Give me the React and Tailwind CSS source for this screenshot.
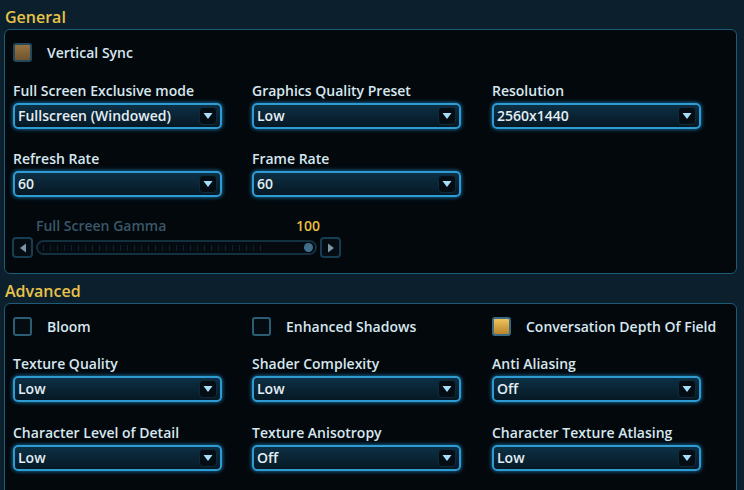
const font = { fontFamily: '"Open Sans", "DejaVu Sans", sans-serif' }

function Arrow() {
  return (
    <span className="absolute right-[3px] top-[2px] bottom-[2px] w-[18px] rounded-[4px] bg-[#050d14] border border-[#0e2a3a] flex items-center justify-center">
      <svg width="10" height="8" viewBox="0 0 10 8">
        <path d="M0.5 1 L9.5 1 L5 7 Z" fill="#a6defa" />
      </svg>
    </span>
  )
}

function Dropdown({ value }) {
  return (
    <div className="relative w-[209px] h-[26px] rounded-[5px] border-2 border-[#2f9bd3] bg-gradient-to-b from-[#0d3045] to-[#061824] shadow-[0_0_4px_#1c86c0] flex items-center pl-[3px]">
      <span className="text-[14px] font-semibold text-[#e3eef4] leading-none whitespace-nowrap">{value}</span>
      <Arrow />
    </div>
  )
}

function Field({ label, value }) {
  return (
    <div className="flex flex-col gap-[4px]">
      <span className="h-[16px] text-[14px] font-semibold text-[#d6e7ef] leading-[16px] whitespace-nowrap">{label}</span>
      <Dropdown value={value} />
    </div>
  )
}

function Check({ state, label }) {
  const box =
    state === 'gold'
      ? 'bg-gradient-to-b from-[#f0c45a] to-[#b8852a] border-[#3c6a82]'
      : state === 'brown'
      ? 'bg-gradient-to-b from-[#97733f] to-[#6e5430] border-[#24485c]'
      : 'bg-[#040c12] border-[#2b5d75]'
  return (
    <div className="flex items-center h-[20px]">
      <span className={`shrink-0 w-[19px] h-[19px] rounded-[3px] border-2 ${box}`} />
      <span className="ml-[15px] text-[14px] font-semibold text-[#d6e7ef] whitespace-nowrap">{label}</span>
    </div>
  )
}

function Slider() {
  return (
    <div className="flex flex-col">
      <div className="flex items-end h-[16px] pl-[23px] pr-[24px] w-[331px]">
        <span className="text-[14px] font-semibold text-[#3b5768] leading-[16px] whitespace-nowrap">Full Screen Gamma</span>
        <span className="ml-auto text-[14px] font-semibold text-[#e7bf3e] leading-[16px]">100</span>
      </div>
      <div className="flex items-center gap-[3px] mt-[3px] -ml-[1px]">
        <span className="w-[21px] h-[21px] rounded-[4px] border-2 border-[#173d52] bg-[#050c12] flex items-center justify-center">
          <svg width="8" height="10" viewBox="0 0 8 10"><path d="M7 0.5 L7 9.5 L1 5 Z" fill="#7d97a6" /></svg>
        </span>
        <span className="relative w-[281px] h-[15px] rounded-full border-2 border-[#12303f] bg-[#040a0f] flex items-center px-[5px] gap-[6px] overflow-hidden">
          {Array.from({ length: 32 }).map((_, i) => (
            <span key={i} className="w-[1px] h-[6px] bg-[#10242f]" />
          ))}
          <span className="absolute right-[2px] top-[1px] w-[9px] h-[9px] rounded-full bg-[#3f6f8c]" />
        </span>
        <span className="w-[21px] h-[21px] rounded-[4px] border-2 border-[#173d52] bg-[#050c12] flex items-center justify-center">
          <svg width="8" height="10" viewBox="0 0 8 10"><path d="M1 0.5 L1 9.5 L7 5 Z" fill="#7d97a6" /></svg>
        </span>
      </div>
    </div>
  )
}

const grid = 'grid grid-cols-[239px_240px_209px]'

export default function App() {
  return (
    <div className="w-[744px] h-[490px] overflow-hidden bg-[#0b202c] pl-[4px] pr-[7px]" style={font}>
      <div className="h-[29px] flex items-center pl-[1px] pt-[4px]">
        <span className="text-[16px] font-semibold text-[#e9c24a] leading-none">General</span>
      </div>
      <div className="rounded-[6px] border border-[#1f5a76] bg-[#03080d] pl-[8px] pt-[12px] pb-[14px] h-[245px]">
        <Check state="brown" label="Vertical Sync" />
        <div className={`${grid} mt-[21px] gap-y-[22px]`}>
          <Field label="Full Screen Exclusive mode" value="Fullscreen (Windowed)" />
          <Field label="Graphics Quality Preset" value="Low" />
          <Field label="Resolution" value="2560x1440" />
          <Field label="Refresh Rate" value="60" />
          <Field label="Frame Rate" value="60" />
          <div />
        </div>
        <div className="mt-[21px]">
          <Slider />
        </div>
      </div>
      <div className="h-[29px] flex items-center pl-[1px] pt-[5px]">
        <span className="text-[16px] font-semibold text-[#e9c24a] leading-none">Advanced</span>
      </div>
      <div className="rounded-[6px] border border-[#1f5a76] bg-[#03080d] pl-[8px] pt-[12px] h-[200px]">
        <div className={grid}>
          <Check state="off" label="Bloom" />
          <Check state="off" label="Enhanced Shadows" />
          <Check state="gold" label="Conversation Depth Of Field" />
        </div>
        <div className={`${grid} mt-[20px] gap-y-[23px]`}>
          <Field label="Texture Quality" value="Low" />
          <Field label="Shader Complexity" value="Low" />
          <Field label="Anti Aliasing" value="Off" />
          <Field label="Character Level of Detail" value="Low" />
          <Field label="Texture Anisotropy" value="Off" />
          <Field label="Character Texture Atlasing" value="Low" />
        </div>
      </div>
    </div>
  )
}
